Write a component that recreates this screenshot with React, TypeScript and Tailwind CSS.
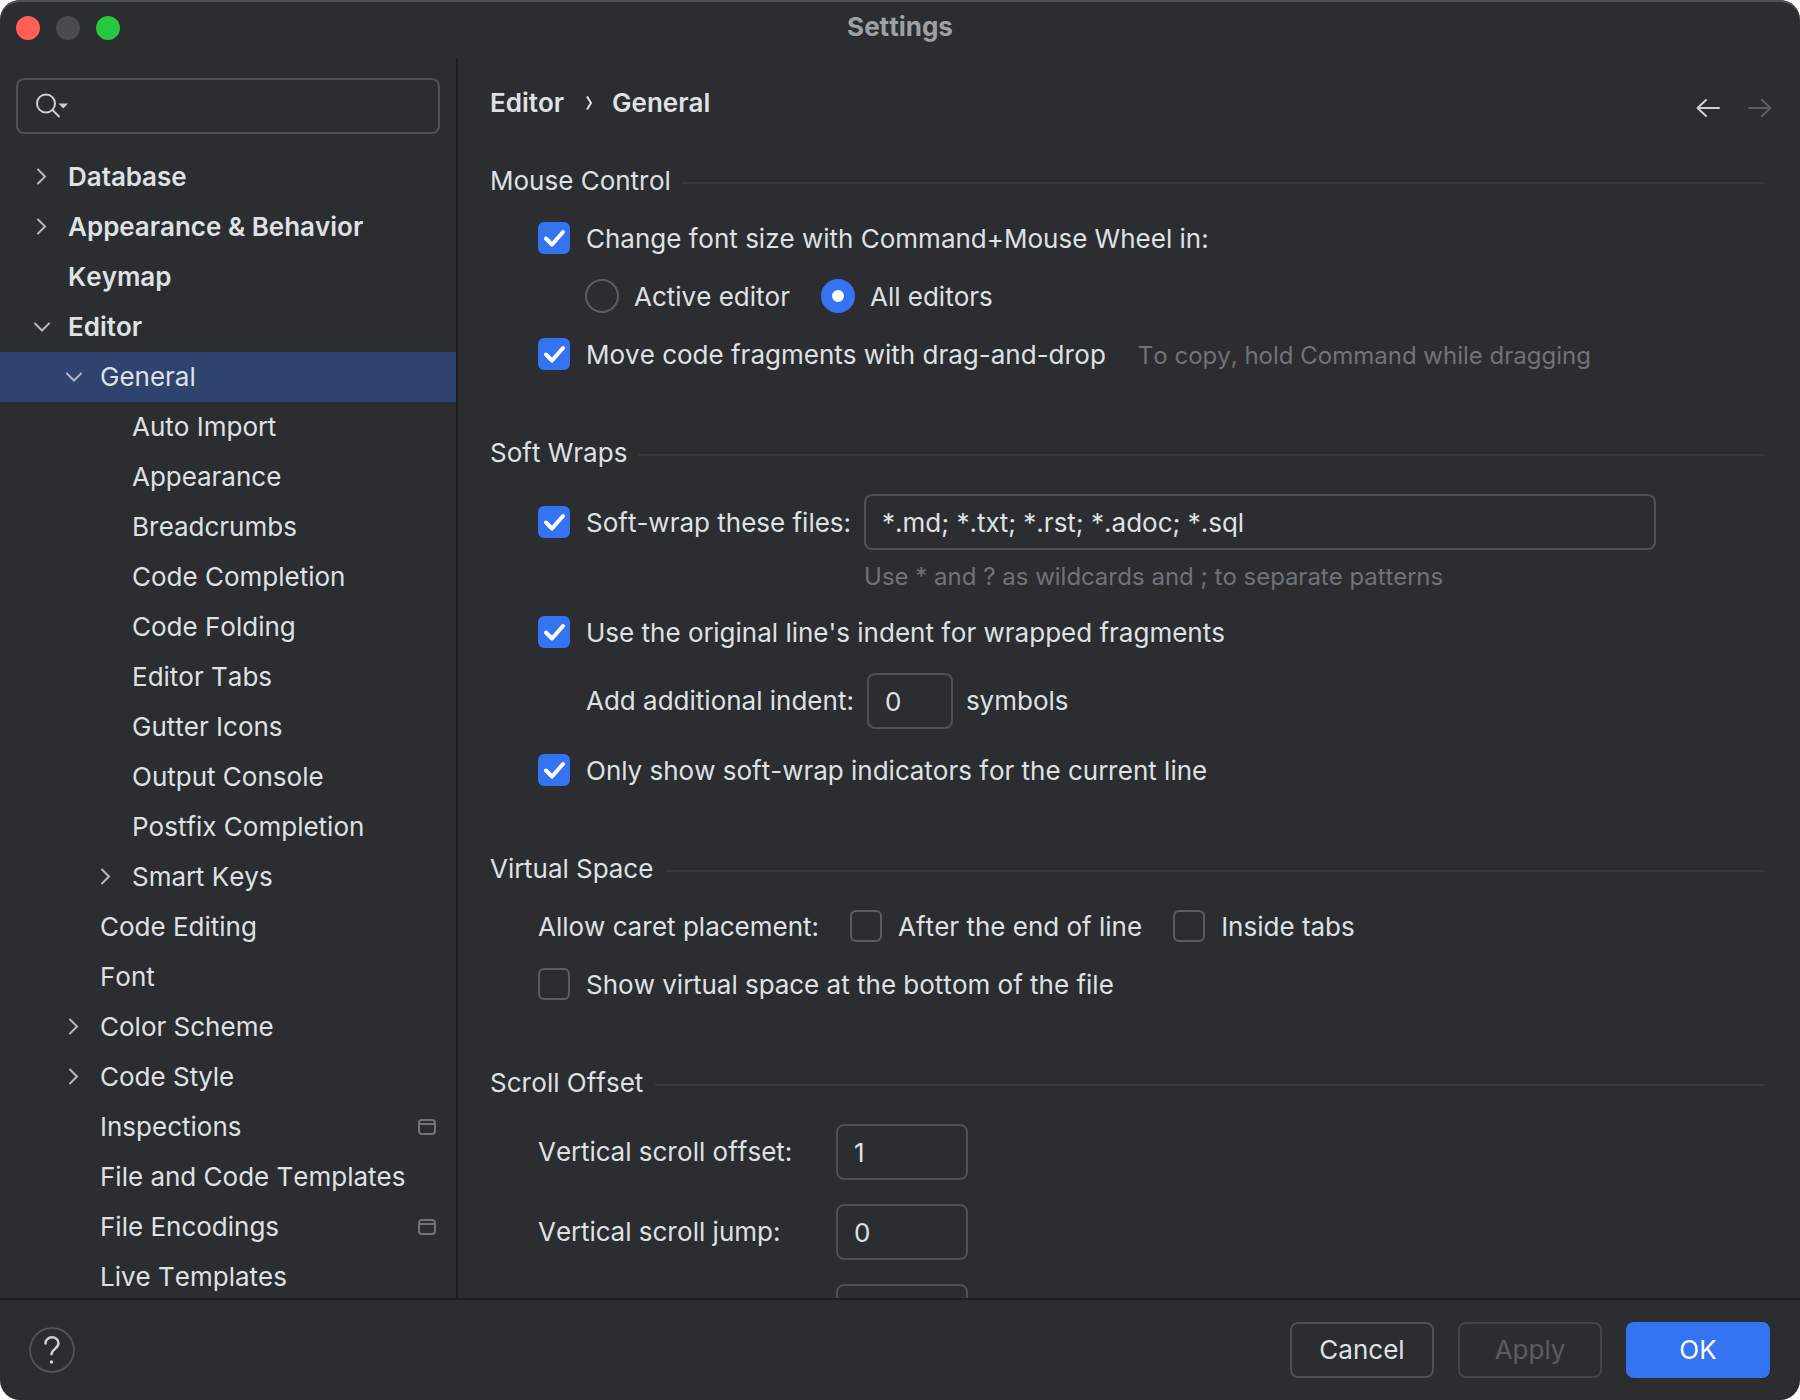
import { useState } from "react";
import type { ReactNode } from "react";

type TreeItem = {
  label: string;
  level: number;
  state?: "open" | "closed";
  project?: boolean;
};

const tree: TreeItem[] = [
  { label: "Database", level: 0, state: "closed" },
  { label: "Appearance & Behavior", level: 0, state: "closed" },
  { label: "Keymap", level: 0 },
  { label: "Editor", level: 0, state: "open" },
  { label: "General", level: 1, state: "open" },
  { label: "Auto Import", level: 2 },
  { label: "Appearance", level: 2 },
  { label: "Breadcrumbs", level: 2 },
  { label: "Code Completion", level: 2 },
  { label: "Code Folding", level: 2 },
  { label: "Editor Tabs", level: 2 },
  { label: "Gutter Icons", level: 2 },
  { label: "Output Console", level: 2 },
  { label: "Postfix Completion", level: 2 },
  { label: "Smart Keys", level: 2, state: "closed" },
  { label: "Code Editing", level: 1 },
  { label: "Font", level: 1 },
  { label: "Color Scheme", level: 1, state: "closed" },
  { label: "Code Style", level: 1, state: "closed" },
  { label: "Inspections", level: 1, project: true },
  { label: "File and Code Templates", level: 1 },
  { label: "File Encodings", level: 1, project: true },
  { label: "Live Templates", level: 1 },
];

const indents = ["pl-[26px]", "pl-[58px]", "pl-[90px]"];

function Chevron({ state }: { state?: "open" | "closed" }) {
  return (
    <svg className="size-8 shrink-0" viewBox="0 0 32 32" fill="none" stroke="#b4b8bf" strokeWidth="2" strokeLinecap="round">
      {state === "closed" && <path d="M12 8.5l7 7-7 7" />}
      {state === "open" && <path d="M9 12.5l7 7 7-7" />}
    </svg>
  );
}

function Sidebar() {
  const [selected, setSelected] = useState("General");

  return (
    <aside className="flex w-[458px] shrink-0 flex-col border-r-2 border-[#1e1f22]">
      <div className="px-4 pt-5 pb-[18px]">
        <label className="flex h-14 items-center rounded-lg border-2 border-[#4e5157] pr-3 pl-4">
          <svg className="h-8 w-9 shrink-0" viewBox="0 0 36 32" fill="none">
            <circle cx="12" cy="13.5" r="9" stroke="#ced0d6" strokeWidth="2" />
            <path d="M18.5 20l7 7" stroke="#ced0d6" strokeWidth="2" />
            <path d="M24.5 13.5h9.5l-4.75 5z" fill="#ced0d6" />
          </svg>
          <input type="text" aria-label="Search settings" className="min-w-0 flex-1 bg-transparent outline-none" />
        </label>
      </div>
      <nav className="min-h-0 flex-1 overflow-y-auto [scrollbar-width:none]">
        <ul>
          {tree.map((item) => (
            <li key={item.label}>
              <button
                onClick={() => setSelected(item.label)}
                className={`flex h-[50px] w-full items-center gap-2.5 pr-5 text-left ${indents[item.level]} ${
                  item.level === 0 ? "font-semibold" : ""
                } ${item.label === selected ? "bg-[#2e436e]" : ""}`}
              >
                <Chevron state={item.state} />
                <span className="flex-1 whitespace-nowrap">{item.label}</span>
                {item.project && (
                  <svg className="h-4 w-[18px] shrink-0" viewBox="0 0 18 16" fill="none" stroke="#6f737a" strokeWidth="2">
                    <rect x="1" y="1" width="16" height="14" rx="3" />
                    <path d="M1 5h16" />
                  </svg>
                )}
              </button>
            </li>
          ))}
        </ul>
      </nav>
    </aside>
  );
}

function Checkbox({ label, checked }: { label: string; checked?: boolean }) {
  return (
    <label className="flex h-8 items-center gap-4 whitespace-nowrap">
      <span className="grid">
        <input
          type="checkbox"
          defaultChecked={checked}
          className="peer col-start-1 row-start-1 size-8 appearance-none rounded-md border-2 border-[#5a5d63] checked:border-[#3574f0] checked:bg-[#3574f0]"
        />
        <svg
          className="pointer-events-none invisible col-start-1 row-start-1 size-8 peer-checked:visible"
          viewBox="0 0 32 32"
          fill="none"
          stroke="white"
          strokeWidth="4"
          strokeLinecap="round"
          strokeLinejoin="round"
        >
          <path d="M8 16.5l6 6L25 10" />
        </svg>
      </span>
      <span className="pt-0.5">{label}</span>
    </label>
  );
}

function Radio({ label, checked }: { label: string; checked?: boolean }) {
  return (
    <label className="flex items-center gap-[15px] whitespace-nowrap">
      <input
        type="radio"
        name="zoom-scope"
        defaultChecked={checked}
        className="size-[34px] appearance-none rounded-full border-2 border-[#5a5d63] checked:border-[11px] checked:border-[#3574f0] checked:bg-white"
      />
      <span className="pt-0.5">{label}</span>
    </label>
  );
}

type TextFieldProps = { id: string; value: string; className: string; label?: string };

function TextField({ id, value, className, label }: TextFieldProps) {
  return (
    <input
      id={id}
      type="text"
      aria-label={label}
      defaultValue={value}
      className={`h-14 rounded-lg border-2 border-[#4e5157] bg-transparent px-4 outline-none [font-kerning:none] ${className}`}
    />
  );
}

function Section({ title, children }: { title: string; children: ReactNode }) {
  return (
    <section>
      <div className="flex h-8 items-center gap-3">
        <h2>{title}</h2>
        <div className="mt-1 h-0.5 flex-1 bg-[#393b40]" />
      </div>
      <div className="mt-[25px] pl-12">{children}</div>
    </section>
  );
}

function Content() {
  return (
    <main className="min-w-0 flex-1 overflow-y-auto pl-8 [scrollbar-width:none]">
      <header className="flex items-start justify-between pt-[29px] pr-6 pb-[41px]">
        <h1 className="flex h-8 items-center gap-5 font-semibold">
          <span>Editor</span>
          <svg className="h-4 w-2" viewBox="0 0 8 16" fill="none" stroke="#dfe1e5" strokeWidth="2">
            <path d="M3 1.500L7 8l-4 6.500" />
          </svg>
          <span>General</span>
        </h1>
        <div className="mt-[5px] flex gap-5">
          <button aria-label="Back">
            <svg className="size-8" viewBox="0 0 32 32" fill="none" stroke="#ced0d6" strokeWidth="2" strokeLinecap="round" strokeLinejoin="round">
              <path d="M27 16H5.5M14 8l-8.5 8 8.5 8" />
            </svg>
          </button>
          <button aria-label="Forward" disabled>
            <svg className="size-8" viewBox="0 0 32 32" fill="none" stroke="#5a5d63" strokeWidth="2" strokeLinecap="round" strokeLinejoin="round">
              <path d="M5 16h21.5M18 8l8.5 8-8.5 8" />
            </svg>
          </button>
        </div>
      </header>

      <div className="flex flex-col gap-[67px] pr-9">
        <Section title="Mouse Control">
          <div className="flex flex-col gap-[26px]">
            <Checkbox label="Change font size with Command+Mouse Wheel in:" checked />
            <div className="flex h-8 items-center gap-[31px] pl-[47px]">
              <Radio label="Active editor" />
              <Radio label="All editors" checked />
            </div>
            <div className="flex h-8 items-center gap-8">
              <Checkbox label="Move code fragments with drag-and-drop" checked />
              <span className="pt-1 text-2xl/8 text-[#6f737a]">To copy, hold Command while dragging</span>
            </div>
          </div>
        </Section>

        <Section title="Soft Wraps">
          <div className="grid grid-cols-[auto_1fr] items-center gap-x-[13px] pr-[108px]">
            <Checkbox label="Soft-wrap these files:" checked />
            <TextField
              id="soft-wrap-files"
              label="Soft-wrap file patterns"
              value="*.md; *.txt; *.rst; *.adoc; *.sql"
              className="w-full"
            />
            <p className="col-start-2 mt-3 text-2xl/[30px] text-[#6f737a]">
              Use * and ? as wildcards and ; to separate patterns
            </p>
          </div>
          <div className="mt-6 flex flex-col gap-[25px]">
            <Checkbox label="Use the original line's indent for wrapped fragments" checked />
            <div className="flex items-center gap-[13px] pl-12">
              <label htmlFor="indent">Add additional indent:</label>
              <TextField id="indent" value="0" className="w-[86px]" />
              <span>symbols</span>
            </div>
            <Checkbox label="Only show soft-wrap indicators for the current line" checked />
          </div>
        </Section>

        <Section title="Virtual Space">
          <div className="flex flex-col gap-[26px]">
            <div className="flex h-8 items-center gap-[31px]">
              <span className="pt-0.5">Allow caret placement:</span>
              <Checkbox label="After the end of line" />
              <Checkbox label="Inside tabs" />
            </div>
            <Checkbox label="Show virtual space at the bottom of the file" />
          </div>
        </Section>

        <Section title="Scroll Offset">
          <div className="grid grid-cols-[298px_132px] items-center gap-y-6">
            <label htmlFor="v-offset">Vertical scroll offset:</label>
            <TextField id="v-offset" value="1" className="w-full" />
            <label htmlFor="v-jump">Vertical scroll jump:</label>
            <TextField id="v-jump" value="0" className="w-full" />
            <TextField id="h-offset" label="Horizontal scroll offset" value="" className="col-start-2 w-full" />
          </div>
        </Section>
      </div>
    </main>
  );
}

export default function App() {
  return (
    <div className="h-screen bg-white font-['Inter',sans-serif] text-[26px]/8 text-[#dfe1e5] [font-kerning:none]">
      <div className="flex h-full flex-col overflow-hidden rounded-[20px] bg-[#2b2d30] shadow-[inset_0_2px_0_#505255]">
        <div className="grid h-[58px] shrink-0 grid-cols-[1fr_auto_1fr] items-center px-4 pb-1">
          <div className="flex gap-4 pt-0.5">
            <button aria-label="Close" className="size-6 rounded-full bg-[#ff5f57]" />
            <button aria-label="Minimize" className="size-6 rounded-full bg-[#4a4b4e]" />
            <button aria-label="Zoom" className="size-6 rounded-full bg-[#28c840]" />
          </div>
          <div className="font-bold text-[#9fa0a2]">Settings</div>
        </div>

        <div className="flex min-h-0 flex-1">
          <Sidebar />
          <Content />
        </div>

        <footer className="flex h-[102px] shrink-0 items-center gap-6 border-t-2 border-[#1e1f22] pr-[30px] pl-[29px]">
          <button
            aria-label="Help"
            className="mr-auto flex size-[46px] items-center justify-center rounded-full border-2 border-[#4e5157]"
          >
            <svg className="size-8" viewBox="0 0 32 32" fill="none">
              <path
                d="M9.5 9.5a6.5 6.2 0 0 1 13-.2c0 5.2-7 6-7 11"
                stroke="#ced0d6"
                strokeWidth="2.5"
                strokeLinecap="round"
              />
              <circle cx="15.5" cy="28" r="1.7" fill="#ced0d6" />
            </svg>
          </button>
          <button className="h-14 w-36 rounded-lg border-2 border-[#4e5157]">Cancel</button>
          <button disabled className="h-14 w-36 rounded-lg border-2 border-[#43454a] text-[#5a5d63]">
            Apply
          </button>
          <button className="h-14 w-36 rounded-lg bg-[#3574f0] text-white">OK</button>
        </footer>
      </div>
    </div>
  );
}
